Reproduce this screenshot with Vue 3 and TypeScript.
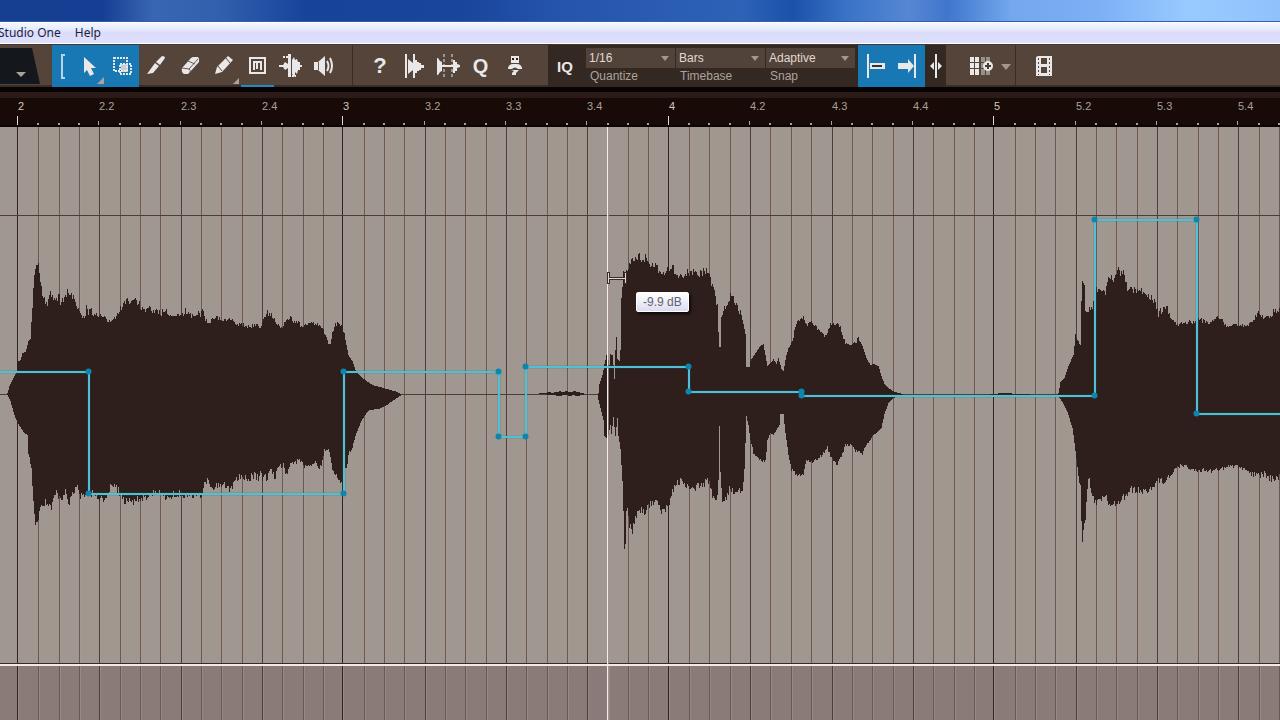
<script setup lang="ts">
import { computed, onBeforeUnmount, onMounted, ref } from 'vue'

type Anchor = [number, number]

const BAR = 325.4
const ORIGIN = 18
const quantize = ref('1/16')
const timebase = ref('Bars')
const snap = ref('Adaptive')

const viewWidth = ref(window.innerWidth)
const measure = () => { viewWidth.value = window.innerWidth }
onMounted(() => window.addEventListener('resize', measure))
onBeforeUnmount(() => window.removeEventListener('resize', measure))

const parse = (s: string): Anchor[] =>
  s.trim().split(/\s+/).map(p => p.split(',').map(Number) as Anchor)

const regions = [
  {
    top: `7,393 9,386 13,378 16,372 17,362 20,360 22,353 25,352 28,342 30,339 31,320 33,290 34,273 36,265 38,266 39,277 41,285 43,300 47,303 49,294 52,295 53,303 57,300 58,291 60,303 64,298 67,292 70,297 73,297 75,306 79,309 82,317 84,317 86,307 88,311 90,307 93,314 100,316 104,315 107,322 110,320 115,318 119,310 123,305 128,300 131,302 134,301 138,302 141,309 146,309 150,307 154,311 160,313 167,311 171,316 180,314 186,312 195,315 200,313 203,311 205,320 208,323 211,320 216,316 220,320 225,320 230,318 234,324 242,324 248,327 255,325 261,327 263,318 267,313 271,315 275,321 281,329 285,322 290,318 294,322 299,323 302,329 307,324 310,322 314,324 320,326 323,331 326,337 328,344 330,344 332,332 335,325 339,322 342,329 344,334 346,345 348,355 352,361 355,370 360,376 366,381 372,385 380,387 390,390 397,392 401,394`,
    bottom: `7,395 10,401 13,412 17,423 20,427 24,433 27,435 28,452 31,468 33,500 35,525 37,525 39,513 42,506 45,501 48,503 51,509 53,499 56,492 58,501 63,497 65,492 68,503 71,497 74,491 77,488 80,495 88,495 93,493 100,500 105,498 110,488 114,485 118,491 122,500 128,500 132,504 136,498 142,497 150,496 155,491 160,493 166,498 170,495 180,493 185,495 195,496 200,497 204,483 208,480 212,487 218,486 223,483 228,489 232,487 236,480 241,474 247,480 252,475 258,478 260,470 262,479 267,477 270,468 274,478 278,467 283,465 286,476 290,463 295,463 299,459 302,464 306,468 310,466 315,462 318,468 321,465 324,451 327,449 330,455 332,470 336,478 340,483 342,480 343,470 346,469 348,455 352,446 356,433 361,421 366,413 369,410 378,409 385,406 392,401 398,397 401,395`,
  },
  {
    top: `598,393 599,384 602,375 604,364 606,355 608,360 609,365 610,354 612,355 613,365 614,379 615,350 616,337 617,359 619,361 620,350 621,300 623,275 628,268 632,259 636,260 639,255 641,261 646,257 648,265 652,265 656,268 660,273 666,271 669,267 673,268 677,276 684,276 687,271 690,275 694,271 698,275 703,272 708,272 711,284 714,293 717,307 718,330 719,347 720,347 721,317 723,309 724,305 727,308 729,297 733,297 737,307 741,316 745,335 746,367 749,367 750,361 755,353 760,346 763,344 765,355 767,366 771,362 773,359 776,364 778,358 781,369 783,371 786,355 788,348 792,342 794,331 797,322 800,319 803,318 806,326 810,322 815,325 818,330 822,335 826,336 830,325 834,324 837,321 840,328 845,343 850,345 855,343 858,338 862,346 866,358 870,365 873,364 878,366 881,376 884,384 888,388 894,392 903,394`,
    bottom: `598,400 600,408 603,420 604,436 606,438 607,432 608,435 610,425 611,434 613,417 615,436 617,418 618,436 620,447 622,480 623,510 624,548 625,546 626,508 628,515 629,525 632,531 635,517 640,509 645,512 650,504 655,501 660,508 663,513 669,505 671,493 676,484 682,480 687,486 690,489 693,492 698,484 704,484 707,477 711,491 714,500 717,495 718,480 719,426 720,470 722,498 726,499 729,490 733,493 738,489 742,490 744,470 746,416 748,425 750,440 753,453 757,458 761,462 765,461 767,440 770,433 773,435 776,430 779,425 780,414 783,414 785,433 788,453 791,470 797,475 803,473 806,462 812,461 818,459 824,452 827,448 831,458 836,465 840,459 845,446 850,445 855,451 862,454 868,443 872,436 877,432 881,428 884,414 888,403 893,398 903,395`,
  },
  {
    top: `1058,393 1060,382 1064,378 1068,366 1073,355 1075,336 1078,341 1080,345 1081,300 1082,279 1084,285 1085,312 1089,311 1093,304 1096,290 1101,288 1105,292 1109,275 1113,281 1117,269 1121,275 1124,273 1127,288 1131,291 1138,290 1145,293 1150,297 1155,303 1158,313 1162,310 1165,306 1168,311 1171,320 1177,325 1185,322 1193,322 1198,319 1208,323 1215,319 1218,317 1223,322 1227,327 1236,324 1241,326 1248,325 1255,317 1258,313 1261,316 1266,318 1271,318 1273,312 1280,310`,
    bottom: `1058,396 1062,402 1067,412 1072,428 1075,450 1077,468 1080,487 1081,520 1082,538 1085,520 1087,486 1089,479 1091,490 1094,503 1100,500 1104,493 1108,503 1114,503 1120,500 1126,496 1131,490 1137,490 1144,493 1150,490 1157,479 1164,481 1171,474 1176,467 1182,465 1188,467 1196,471 1205,470 1212,471 1219,470 1227,467 1236,466 1244,469 1251,474 1257,477 1265,474 1273,480 1280,478`,
  },
]

// The lane drawing starts below the ruler, so sample heights are shifted by its top edge.
const LANE_TOP = 127

function columns(anchors: Anchor[], seed: number) {
  const out: Anchor[] = []
  for (let i = 0; i < anchors.length - 1; i++) {
    const [x0, y0] = anchors[i]
    const [x1, y1] = anchors[i + 1]
    for (let x = x0; x < x1; x++) {
      const y = y0 + ((y1 - y0) * (x - x0)) / (x1 - x0)
      const level = Math.abs(y - 394)
      const n = Math.sin(x * 12.9898 + seed) * 43758.5453
      const jitter = ((n - Math.floor(n)) * 2 - 1) * (level > 80 ? 4 : level > 50 ? 2 : 0)
      out.push([x, Math.round(y + jitter) - LANE_TOP])
    }
  }
  return out
}

const waves = regions.map((r, i) => {
  const top = columns(parse(r.top), i + 1)
  const bottom = columns(parse(r.bottom), i + 7).reverse()
  return 'M' + top.map(([x, y]) => `${x},${y}H${x + 1}`).join('L') +
    'L' + bottom.map(([x, y]) => `${x + 1},${y}H${x}`).join('L') + 'Z'
})

const marks = computed(() => {
  const count = Math.ceil(((viewWidth.value - ORIGIN) * 16) / BAR)
  return Array.from({ length: count }, (_, i) => ({
    x: Math.round(ORIGIN + (i * BAR) / 16),
    kind: i % 16 === 0 ? 'bar' : i % 4 === 0 ? 'beat' : 'step',
    label: i % 16 === 0 ? `${2 + i / 16}` : i % 4 === 0 ? `${2 + Math.floor(i / 16)}.${1 + (i % 16) / 4}` : '',
  }))
})

const nodes: Anchor[] = [
  [88, 371], [88, 493], [343, 493], [343, 371], [498, 371], [498, 436], [525, 436], [525, 366],
  [688, 366], [688, 391], [801, 391], [801, 395], [1094, 395], [1094, 219], [1196, 219], [1196, 413],
]
const gain = 'M-2 245' + nodes.map(([x, y]) => `L${x + 1} ${y - LANE_TOP + 1}`).join('') + 'H4000'
</script>

<template>
  <div class="app">
    <div class="desktop"></div>
    <nav class="menu">
      <button>Studio One</button>
      <button>Help</button>
    </nav>

    <header class="toolbar">
      <button class="preset" aria-label="Input menu"><svg width="40" height="36"><path d="M0 0H32L40 36H0Z" fill="#14171c" /><path d="M16 24h10l-5 5z" fill="#aaa19a" /></svg></button>

      <div class="active-tools">
        <svg class="bracket" width="20" height="28"><path d="M13 2H10V25H13" fill="none" stroke="#b8d5e6" stroke-width="2" /></svg>
        <button aria-label="Arrow tool"><svg viewBox="0 0 34 40"><path d="M12 11v16l3-3 3 6 4-2-3-6h5z" /><path class="corner" d="M32 31v7h-7z" /></svg></button>
        <button aria-label="Range tool"><svg viewBox="0 0 34 40"><path d="M9 12h13v13H9z" fill="none" stroke-width="2" stroke-dasharray="2 1" class="line" /><path d="M15 18h11v10H15z" fill="none" stroke-width="2" stroke-dasharray="2 1" class="line" /><path d="M16 18h7v8h-7z" opacity=".8" /></svg></button>
      </div>

      <div class="tools">
        <button aria-label="Split tool"><svg viewBox="0 0 34 40"><path d="M8 28l8-11 4 3-6 7z" /><path d="M17 16l6-6q3 0 3 2l-5 7z" /></svg></button>
        <button aria-label="Eraser tool"><svg viewBox="0 0 34 40"><path d="M9 22l9-10q1-1 3-1h4q2 2 1 5l-9 10q-1 2-3 2h-3q-3-2-2-6z" /><path d="M9 22l7 1q2 1 1 4M16 23l9-10M15 15l7 3" fill="none" stroke="#655b55" /></svg></button>
        <button aria-label="Paint tool"><svg viewBox="0 0 34 40"><path d="M8 28l2-7L21 10l5 4-11 12z" /><path d="M11 20l4 5M19 12l4 5" fill="none" stroke="#54443a" stroke-width="1" /><path class="corner" d="M32 32v6h-6z" /></svg></button>
        <button class="mute" aria-label="Mute tool"><svg viewBox="0 0 34 40"><path d="M9 12h15v15H9z" fill="none" stroke-width="2" class="line" /><path d="M13 24V16h7v8M16 16v7" fill="none" stroke-width="2" class="line" /></svg></button>
        <button aria-label="Bend tool"><svg viewBox="0 0 34 40"><path d="M5 19h4l2-3 3 2v4l-3 2-2-3H5zM14 8h3v23h-3zM18 14l2-3 1 3 2-1 1 3 2 0v3l2 0v2l-2 0v3l-2 0-1 4-2-2v5l-3-3z" /><path d="M9 11h5M15 30h7" class="line" stroke-width="2" stroke-dasharray="2 1" /></svg></button>
        <button aria-label="Listen tool"><svg viewBox="0 0 34 40"><path d="M7 16h4l7-6v20l-7-6H7z" /><path d="M20 15q3 5 0 10M23 12q4 8 0 15" fill="none" class="line" stroke-width="2" /><path d="M11.500 16v8" stroke="#655b55" /></svg></button>
      </div>

      <div class="actions">
        <button class="glyph" aria-label="Help">?</button>
        <button aria-label="Strip silence"><svg viewBox="0 0 34 40"><path d="M8 8h2v24H8zM16 8h2v24h-2zM11 13l5 4v7l-5 4zM18 14l2 0v2h2v1h2v2h3v3h-3v2h-2v1h-2v2l-2 0z" /></svg></button>
        <button aria-label="Crossfade"><svg viewBox="0 0 34 40"><path d="M6 12l1 0 2 3 2 1v9l-2 1-2 3H6zM22 14h2v2l2 0v2l3 1v2l-3 1v3h-2v2h-2z" /><path d="M13 8v24M21 8v24" stroke-dasharray="3 2" class="line" stroke-width="1" /><path d="M11 20h11" class="line" stroke-width="2" /></svg></button>
        <button class="glyph quick" aria-label="Quantize">Q</button>
        <button aria-label="Melody editor"><svg viewBox="0 0 34 40"><path d="M14 10h8v7h-8zM11 22q1-4 5-4h4q4 0 5 4v1h-4q-3-3-6 0h-4zM14 24h8l-3 3v2h-4v-2l2-2z" /><path d="M15 13h2M19 13h2" stroke="#2a221e" stroke-width="2" /></svg></button>
      </div>

      <div class="quantize">
        <button class="iq">IQ</button>
        <div class="field">
          <select id="quantize" v-model="quantize"><option>1/16</option><option>1/8</option></select>
          <label for="quantize">Quantize</label>
        </div>
        <div class="field">
          <select id="timebase" v-model="timebase"><option>Bars</option><option>Seconds</option></select>
          <label for="timebase">Timebase</label>
        </div>
        <div class="field">
          <select id="snap" v-model="snap"><option>Adaptive</option><option>Bar</option></select>
          <label for="snap">Snap</label>
        </div>
      </div>

      <div class="snap-tools">
        <button aria-label="Snap to start"><svg viewBox="0 0 34 40"><path d="M9 8h2v24H9zM12 17h15v6H12z" /><path d="M14 20h10" stroke="#333" stroke-width="2" /></svg></button>
        <button aria-label="Snap to end"><svg viewBox="0 0 34 40"><path d="M23 8h2v24h-2zM7 17h10v-4l6 7-6 7v-4H7z" /></svg></button>
      </div>
      <button class="cursor" aria-label="Snap to cursor"><svg viewBox="0 0 20 40"><path d="M9 8h2v24H9zM4 20l4-4v8zM16 20l-4-4v8z" /></svg></button>
      <button class="grid-button" aria-label="Add grid"><svg viewBox="0 0 69 40"><path d="M24 11h4v5h-4zM29 11h4v5h-4zM24 17h4v5h-4zM29 17h4v5h-4zM24 23h4v6h-4zM29 23h4v6h-4z" /><path d="M35 11h4v5h-4zM40 11h4v5h-4zM35 17h4v5h-4zM35 23h4v6h-4zM40 23h4v6h-4z" fill="#999089" /><circle cx="42" cy="20" r="5" /><path d="M42 17v6M39 20h6" stroke="#4a3b33" stroke-width="2" /><path d="M55 18h10l-5 6z" fill="#a2968d" /></svg></button>
      <button class="film" aria-label="Video player"><svg viewBox="0 0 34 40"><path d="M9 11l2-1h14v20H9z" /><path d="M14 12h6v6h-6zM14 21h6v6h-6z" fill="#54443a" /><path d="M11.500 12v17M22.500 12v17" stroke="#54443a" stroke-dasharray="2 2" /></svg></button>
    </header>

    <svg class="ruler" width="100%" height="35">
      <rect width="100%" height="6" fill="#2b1a17" />
      <g v-for="m in marks" :key="m.x">
        <rect :x="m.x - 1" :y="m.kind === 'bar' ? 24 : m.kind === 'beat' ? 29 : 31" :width="m.kind === 'step' ? 2 : 1" height="10" :class="['tick', m.kind]" />
        <text v-if="m.label" :x="m.x" y="18" :class="m.kind">{{ m.label }}</text>
      </g>
      <rect y="33" width="100%" height="2" fill="#0d0504" />
    </svg>

    <main class="lanes">
      <svg width="100%" height="100%">
        <rect class="lane" width="100%" height="536" />
        <rect class="next-lane" y="536" width="100%" height="100%" />
        <g v-for="m in marks" :key="m.x">
          <rect :x="m.kind === 'bar' ? m.x - 1 : m.x" width="1" height="100%" :class="['rule', m.kind]" />
          <rect :x="m.kind === 'bar' ? m.x : m.x + 1" width="1" height="100%" class="rule-edge" />
        </g>
        <path d="M0 88.500H4000M0 267.500H4000" class="level" />
        <path v-for="(d, i) in waves" :key="i" :d="d" class="wave" />
        <path class="wave" d="M528 267h11v-1h8v-1h4v1h3v-1h5v-1h2v1h4v-1h3v1h5v-1h3v1h4v1h4v2h-4v1h-5v-1h-3v1h-4v-1h-6v1h-6v-1h-9v-1h-19zM990 267h8v-1h14v1h18v1h-40z" />
        <rect y="536" width="100%" height="1" fill="#3a2927" />
        <rect y="537" width="100%" height="2" fill="#f4e8e5" />
        <rect class="playhead" x="607" width="1" height="100%" />
        <rect class="playhead faint" x="608" width="1" height="100%" />
        <path class="gain-shadow" :d="gain" />
        <path class="gain" :d="gain" />
        <circle v-for="([x, y], i) in nodes" :key="i" :cx="x + 0.5" :cy="y - LANE_TOP + 0.5" r="3" class="node" />
        <g fill="none">
          <path d="M608.500 145v12M625.500 145v12M609 151.500h16" stroke="#3b2c28" stroke-width="3" />
          <path d="M608.500 146v10M625.500 146v10M609 151.500h16" stroke="#ddd6d2" stroke-width="1" />
        </g>
      </svg>
      <output class="tip">-9.9 dB</output>
    </main>
  </div>
</template>

<style>
body { margin: 0; overflow: hidden; }
</style>

<style scoped>
* { box-sizing: border-box; }
.app { min-height: 100vh; display: flex; flex-direction: column; background: #8a7b78; font-family: "Liberation Sans", Arial, sans-serif; font-size: 12px; }
button { border: 0; padding: 0; margin: 0; background: none; font: inherit; color: #e9e7e7; flex: none; }
svg { display: block; }
.desktop { height: 22px; flex: none; border-bottom: 1px solid #315fa4; background: linear-gradient(90deg, #163f91 0, #163f94 8%, #3966b2 12%, #3260ae 17%, #17439b 24%, #1a459c 36%, #2555ad 44%, #2d62b7 58%, #1c51aa 62%, #3972c6 66%, #5687d5 71%, #4076cc 74%, #73a7ee 79%, #7db1f6 86%, #99caff 93%, #91c1fb 100%); }
.menu { height: 22px; flex: none; display: flex; align-items: center; gap: 14px; border-top: 1px solid #fff; border-bottom: 1px solid #fff; background: linear-gradient(#f3f6ff, #e5e9fd 35%, #dadcfb 45%, #dfe0fc); }
.menu button { font-family: "Noto Sans", sans-serif; font-size: 12px; line-height: 18px; color: #201f3f; }
.menu button:first-child { margin-left: -2px; }
.toolbar { height: 48px; flex: none; display: flex; background: #54443a; border-top: 1px solid #423630; border-bottom: 5px solid #080403; box-shadow: inset 0 -2px #3a2d29; }
.toolbar button { height: 42px; display: flex; align-items: center; justify-content: center; }
.toolbar button svg { flex: none; width: 34px; height: 40px; fill: #e9e7e7; }
.toolbar .preset { width: 52px; justify-content: flex-start; }
.toolbar .preset svg { width: 40px; height: 36px; }
.line { stroke: #e9e7e7; }
.toolbar .corner { fill: #aaa49f; }
.active-tools { display: flex; width: 87px; height: 42px; background: #1878b4; }
.active-tools .bracket { margin-top: 8px; }
.active-tools button { width: 33px; }
.tools { display: flex; width: 214px; border-right: 1px solid #372c27; }
.tools button { width: 34px; }
.tools button:nth-child(n + 4) { width: 33px; }
.mute { box-shadow: inset 0 -2px #2288c4; }
.actions { display: flex; width: 195px; padding-left: 10px; }
.actions button { width: 34px; }
.actions button:nth-child(n + 3) { width: 33px; }
.toolbar .glyph { font-size: 22px; font-weight: 700; }
.toolbar .quick { font-size: 20px; }
.quantize { display: flex; width: 310px; background: #342823; }
.quantize .iq { width: 38px; padding-right: 4px; font-size: 15px; font-weight: 700; }
.field { position: relative; width: 89px; padding-top: 3px; margin-right: 1px; display: flex; flex-direction: column; }
.field:last-child { width: 89px; }
.field select { appearance: none; width: 100%; height: 20px; padding: 0 3px; border: 0; border-radius: 0; color: #e0dad5; font: 12px "Liberation Sans", Arial, sans-serif; background: #51423a; }
.field::after { content: ""; position: absolute; top: 11px; right: 6px; border: 4px solid transparent; border-top: 5px solid #a2968d; border-bottom: 0; pointer-events: none; }
.field label { padding-left: 4px; line-height: 17px; color: #aca39d; }
.snap-tools { display: flex; width: 67px; height: 42px; background: #1878b4; }
.snap-tools button { width: 33px; }
.cursor { width: 21px; background: #342823; }
.toolbar .cursor svg { width: 20px; }
.toolbar .grid-button { width: 70px; border-right: 1px solid #372c27; }
.toolbar .grid-button svg { width: 69px; }
.toolbar .film { width: 34px; margin-left: 11px; }
.ruler { flex: none; background: #180b07; }
.ruler text { fill: #aaa09b; font-size: 11px; }
.ruler text.bar { fill: #d0c8c4; }
.tick { fill: #aaa09b; }
.tick.bar { fill: #e0dad6; }
.lanes { position: relative; flex: 1; min-height: 593px; display: flex; }
.lanes svg { position: absolute; inset: 0; }
.lane { fill: #a09790; }
.next-lane { fill: #8a7b78; }
.rule { fill: #6c5853; }
.rule.beat { fill: #4d3d39; }
.rule.bar { fill: #302421; }
.rule-edge { fill: #b09a94; opacity: .45; }
.level { stroke: #4b3d38; stroke-width: 1; }
.wave { fill: #2e1f1d; }
.playhead { fill: #f2eeeb; }
.faint { opacity: .4; }
.gain-shadow { fill: none; stroke: #14738c; stroke-width: 3; opacity: .3; }
.gain { fill: none; stroke: #52c0d3; stroke-width: 2; }
.node { fill: #0c86ad; }
.tip { position: absolute; left: 636px; top: 165px; padding: 1px 6px; border: 1px solid #fff; border-radius: 2px; background: linear-gradient(#fff, #dcdcf1); color: #62626f; line-height: 16px; box-shadow: 2px 2px 3px #100908; }
</style>
